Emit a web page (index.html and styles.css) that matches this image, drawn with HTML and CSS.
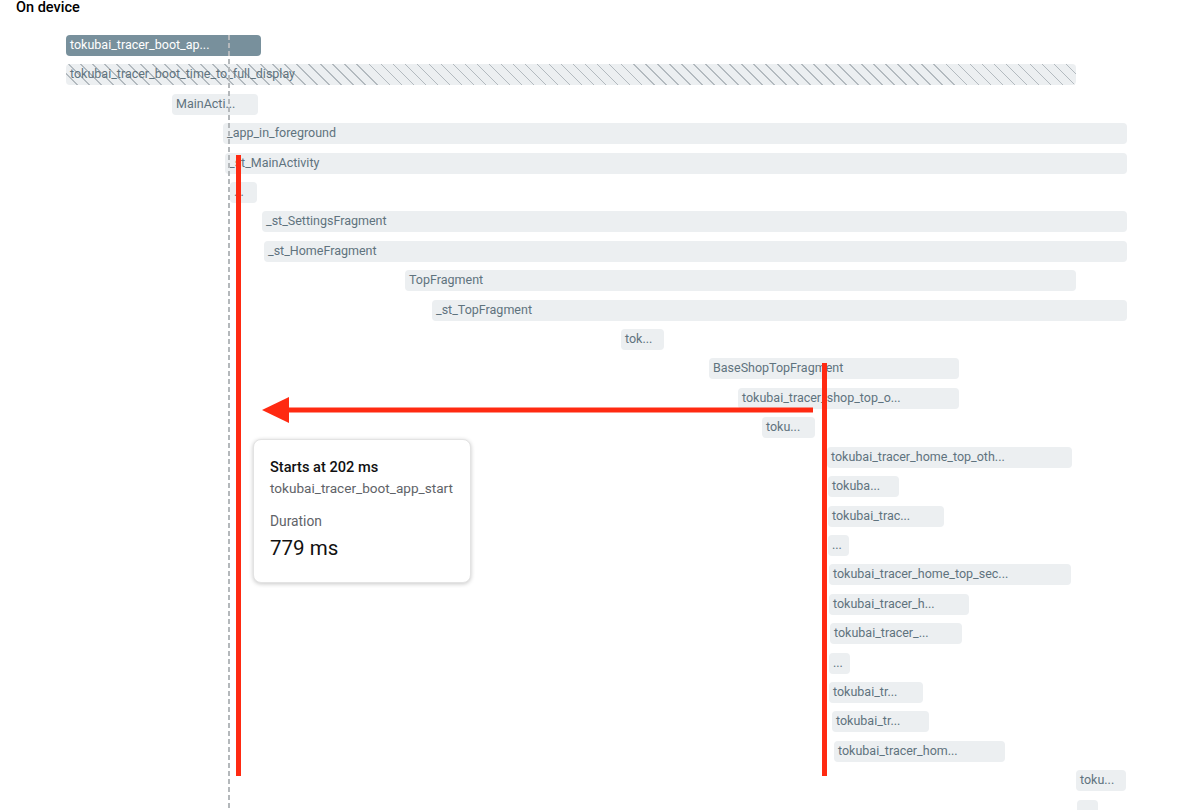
FILE: index.html
```html
<!DOCTYPE html>
<html lang="en">
<head>
  <meta charset="UTF-8" />
  <title>On device – trace</title>
  <link rel="stylesheet" href="styles.css">
</head>
<body>

  <div class="page">
    <h1 class="title">On device</h1>

    <!-- Flame chart rows (offset/width = start/duration of each span) -->
    <div class="chart">
      <div class="row"><div class="bar bar-selected" style="margin-left:66px;width:195px">tokubai_tracer_boot_ap...</div></div>
      <div class="row"><div class="bar bar-hatched" style="margin-left:66px;width:1010px">tokubai_tracer_boot_time_to_full_display</div></div>
      <div class="row"><div class="bar" style="margin-left:172px;width:86px">MainActi...</div></div>
      <div class="row"><div class="bar" style="margin-left:223px;width:904px">_app_in_foreground</div></div>
      <div class="row"><div class="bar" style="margin-left:225px;width:902px">_st_MainActivity</div></div>
      <div class="row"><div class="bar" style="margin-left:230px;width:27px">...</div></div>
      <div class="row"><div class="bar" style="margin-left:262px;width:865px">_st_SettingsFragment</div></div>
      <div class="row"><div class="bar" style="margin-left:264px;width:863px">_st_HomeFragment</div></div>
      <div class="row"><div class="bar" style="margin-left:405px;width:671px">TopFragment</div></div>
      <div class="row"><div class="bar" style="margin-left:432px;width:695px">_st_TopFragment</div></div>
      <div class="row"><div class="bar" style="margin-left:621px;width:43px">tok...</div></div>
      <div class="row"><div class="bar" style="margin-left:709px;width:250px">BaseShopTopFragment</div></div>
      <div class="row"><div class="bar" style="margin-left:738px;width:221px">tokubai_tracer_shop_top_o...</div></div>
      <div class="row"><div class="bar" style="margin-left:762px;width:53px">toku...</div></div>
      <div class="row"><div class="bar" style="margin-left:827px;width:245px">tokubai_tracer_home_top_oth...</div></div>
      <div class="row"><div class="bar" style="margin-left:828px;width:71px">tokuba...</div></div>
      <div class="row"><div class="bar" style="margin-left:828px;width:116px">tokubai_trac...</div></div>
      <div class="row"><div class="bar" style="margin-left:828px;width:21px">...</div></div>
      <div class="row"><div class="bar" style="margin-left:829px;width:242px">tokubai_tracer_home_top_sec...</div></div>
      <div class="row"><div class="bar" style="margin-left:829px;width:140px">tokubai_tracer_h...</div></div>
      <div class="row"><div class="bar" style="margin-left:830px;width:132px">tokubai_tracer_...</div></div>
      <div class="row"><div class="bar" style="margin-left:829px;width:21px">...</div></div>
      <div class="row"><div class="bar" style="margin-left:829px;width:94px">tokubai_tr...</div></div>
      <div class="row"><div class="bar" style="margin-left:832px;width:97px">tokubai_tr...</div></div>
      <div class="row"><div class="bar" style="margin-left:834px;width:171px">tokubai_tracer_hom...</div></div>
      <div class="row"><div class="bar" style="margin-left:1076px;width:50px">toku...</div></div>
      <div class="row"><div class="bar" style="margin-left:1077px;width:21px"></div></div>
    </div>

    <!-- hover cursor -->
    <div class="cursor"></div>

    <!-- hover tooltip -->
    <div class="tooltip">
      <div class="tip-title">Starts at 202 ms</div>
      <div class="tip-name">tokubai_tracer_boot_app_start</div>
      <div class="tip-label">Duration</div>
      <div class="tip-value">779 ms</div>
    </div>

    <!-- red markup drawn over the screenshot -->
    <svg class="markup" width="1200" height="810" viewBox="0 0 1200 810">
      <rect x="236" y="155" width="5" height="621" fill="#ff2a12"/>
      <rect x="822" y="363" width="5" height="413" fill="#ff2a12"/>
      <rect x="286" y="407.5" width="527" height="5" fill="#ff2a12"/>
      <polygon points="262,410 289,397 289,423" fill="#ff2a12"/>
    </svg>
  </div>

</body>
</html>
```

FILE: styles.css
```css
/* Base */
body {
  margin: 0;
  padding: 0;
  background: #fff;
  font-family: Roboto, "Liberation Sans", sans-serif;
  color: #202124;
  overflow: hidden;
}

.page {
  position: relative;
  width: 1200px;
  height: 810px;
  overflow: hidden;
}

.title {
  margin: 0 0 19px;
  padding: 0 16px;
  font-size: 14.5px;
  font-weight: 500;
  line-height: 16px;
  color: #000;
}

/* Flame chart */
.chart {
  display: flex;
  flex-direction: column;
  gap: 8.42px;
}

.row {
  display: flex;
  height: 21px;
}

.bar {
  box-sizing: border-box;
  height: 21px;
  padding: 0 4px;
  border-radius: 4px;
  background: #eceff1;
  color: #5f737e;
  font-size: 12.5px;
  line-height: 20px;
  white-space: nowrap;
  overflow: hidden;
  flex: none;
}

.bar-selected {
  background: #78909c;
  color: #fff;
}

.bar-hatched {
  background-color: #eceff1;
  background-image: repeating-linear-gradient(45deg,
    transparent 0, transparent 7.4px,
    #b3babf 7.4px, #b3babf 8.5px);
}

/* Cursor */
.cursor {
  position: absolute;
  left: 228px;
  top: 35px;
  width: 1.5px;
  height: 775px;
  background: repeating-linear-gradient(to bottom,
    #b4b8bb 0, #b4b8bb 5px,
    transparent 5px, transparent 8px);
}

/* Tooltip */
.tooltip {
  position: absolute;
  left: 253px;
  top: 439px;
  width: 218px;
  height: 144px;
  box-sizing: border-box;
  padding: 18px 16px 0 16px;
  background: #fff;
  border: 1px solid #e3e3e3;
  border-radius: 8px;
  box-shadow: 0 1px 4px rgba(0, 0, 0, 0.22);
}

.tip-title {
  font-size: 14.6px;
  font-weight: 500;
  line-height: 18px;
  color: #111;
}

.tip-name {
  margin-top: 3px;
  font-size: 13.6px;
  line-height: 18px;
  color: #5f6368;
}

.tip-label {
  margin-top: 15px;
  font-size: 13.8px;
  line-height: 18px;
  color: #5f6368;
}

.tip-value {
  margin-top: 6px;
  font-size: 20.5px;
  line-height: 24px;
  color: #111;
}

/* Markup overlay */
.markup {
  position: absolute;
  left: 0;
  top: 0;
  pointer-events: none;
}
```
